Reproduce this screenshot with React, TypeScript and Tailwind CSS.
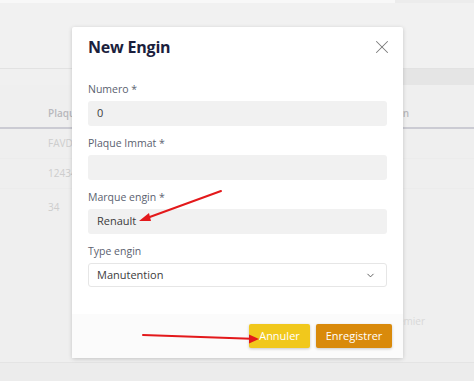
import { X, ChevronDown } from "lucide-react";

const font = { fontFamily: '"Open Sans", "Noto Sans", sans-serif' };

function Field({ label, value }: { label: string; value?: string }) {
  return (
    <div className="mb-[9px]">
      <div className="mb-[4px] h-[16px] text-[10.5px] leading-[16px] text-[#5b5f70]">{label}</div>
      <div className="flex h-[25px] items-center rounded-[3px] bg-[#f1f1f1] px-[9px] text-[11px] text-[#3c3c3c]">
        {value}
      </div>
    </div>
  );
}

function Background() {
  return (
    <div className="flex h-full flex-col bg-[#efefef]">
      <div className="flex h-[3px]">
        <div className="w-[395px] bg-[#f8f8f8]" />
        <div className="flex-1 bg-[#ececec]" />
      </div>
      <div className="h-[65px] bg-[#f1f1f1]" />
      <div className="h-[1px] bg-[#e2e2e2]" />
      <div className="flex h-[16px]">
        <div className="w-[300px] bg-[#f0f0f0]" />
        <div className="flex-1 bg-[#e5e5e5]" />
      </div>
      <div className="flex h-[42px] items-center justify-between pl-[48px] pr-[65px] pt-[14px] text-[10px] font-semibold text-[#b8b8bc]">
        <span>Plaque</span>
        <span>Marque engin</span>
      </div>
      <div className="h-[2px] bg-[#cbcbd3]" />
      <div className="flex h-[30px] items-center border-b border-[#ececec] pl-[48px] text-[10px] text-[#cdcdcd]">FAVD</div>
      <div className="flex h-[30px] items-center border-b border-[#ececec] pl-[48px] text-[10px] text-[#cdcdcd]">12434</div>
      <div className="flex h-[36px] items-center pl-[48px] text-[10px] text-[#cdcdcd]">34</div>
      <div className="flex h-[137px] items-end justify-end pb-[33px] pr-[49px] text-[10px] text-[#d8d8d8]">Premier</div>
      <div className="h-[1px] bg-[#e4e4e4]" />
      <div className="flex-1 bg-[#ececec]" />
    </div>
  );
}

export default function App() {
  return (
    <div className="relative h-[381px] w-[474px] overflow-hidden" style={font}>
      <Background />

      <div className="absolute left-[72px] top-[27px] flex h-[331px] w-[331px] flex-col rounded-[2px] bg-white shadow-[0_1px_4px_rgba(0,0,0,0.18)]">
        <div className="flex h-[38px] items-center justify-between pl-4 pr-[10px] pt-[2px]">
          <h1 className="text-[16px] font-bold tracking-[-0.2px] text-[#1b1f3d]">New Engin</h1>
          <X className="h-[22px] w-[22px] text-[#7a7a7a]" strokeWidth={1.1} />
        </div>

        <div className="px-4 pt-[16px]">
          <Field label="Numero *" value="0" />
          <Field label="Plaque Immat *" />
          <Field label="Marque engin *" value="Renault" />
          <div>
            <div className="mb-[4px] h-[16px] text-[10.5px] leading-[16px] text-[#5b5f70]">Type engin</div>
            <div className="flex h-[24px] items-center justify-between rounded-[3px] border border-[#e6e6e6] bg-white pl-[8px] pr-[10px] text-[11px] text-[#3c3c3c]">
              <span>Manutention</span>
              <ChevronDown className="h-[11px] w-[11px] text-[#555]" strokeWidth={2} />
            </div>
          </div>
        </div>

        <div className="mt-auto flex h-[44px] items-center justify-end gap-[6px] bg-[#fbfbfb] pr-[11px]">
          <button className="h-[24px] w-[61px] rounded-[2px] bg-[#f1c81c] text-[11px] font-medium text-white shadow-[0_1px_3px_rgba(0,0,0,0.2)]">
            Annuler
          </button>
          <button className="h-[24px] w-[76px] rounded-[2px] bg-[#d98a0b] text-[11px] font-medium text-white shadow-[0_1px_3px_rgba(0,0,0,0.2)]">
            Enregistrer
          </button>
        </div>
      </div>

      <svg className="pointer-events-none absolute left-0 top-0" width="474" height="381" viewBox="0 0 474 381">
        <line x1="221" y1="191" x2="147" y2="218" stroke="#e3191b" strokeWidth="2" strokeLinecap="round" />
        <polygon points="139,221 149,213 151,221" fill="#e3191b" />
        <line x1="143" y1="335" x2="251" y2="338.8" stroke="#e3191b" strokeWidth="2" strokeLinecap="round" />
        <polygon points="259,339 249,334.5 249,343.5" fill="#e3191b" />
      </svg>
    </div>
  );
}
